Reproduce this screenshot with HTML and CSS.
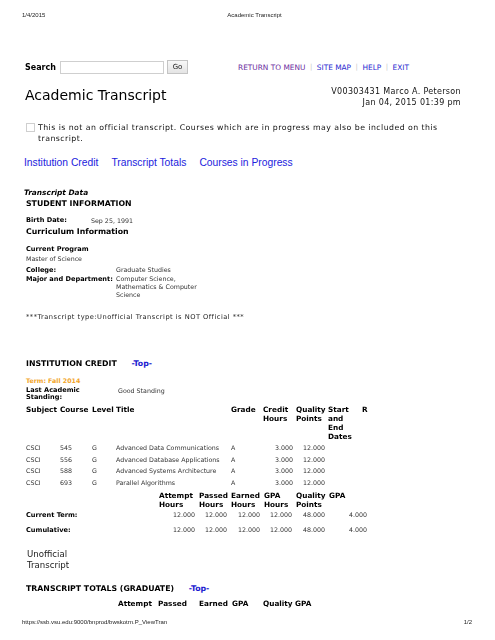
FILE: index.html
```html
<!DOCTYPE html>
<html>
<head>
<meta charset="utf-8">
<title>Academic Transcript</title>
<link rel="stylesheet" href="styles.css">
</head>
<body>
<div class="printhead gray"><span class="ph-date">1/4/2015</span><span class="ph-title">Academic Transcript</span></div>

<div class="searchbar">
  <div class="search"><b class="search-label gray">Search</b><span class="search-input"></span><span class="go-btn gray">Go</span></div>
  <div class="toplinks"><a class="visited">RETURN TO MENU</a><span class="sep">|</span><a>SITE MAP</a><span class="sep">|</span><a>HELP</a><span class="sep">|</span><a>EXIT</a></div>
</div>

<div class="titlerow">
  <h1 class="gray">Academic Transcript</h1>
  <div class="ident gray">V00303431 Marco A. Peterson<br>Jan 04, 2015 01:39 pm</div>
</div>

<div class="notice"><span class="chk"></span><p class="gray">This is not an official transcript. Courses which are in progress may also be included on this transcript.</p></div>

<nav class="sections"><a>Institution Credit</a><a>Transcript Totals</a><a>Courses in Progress</a></nav>

<div class="content">
  <div class="caption gray">Transcript Data</div>
  <div class="h-section gray">STUDENT INFORMATION</div>
  <div class="birth gray"><span class="lbl">Birth Date:</span><span class="val">Sep 25, 1991</span></div>
  <div class="h-section h-curr gray">Curriculum Information</div>
  <div class="lbl prog gray">Current Program</div>
  <div class="val degree gray">Master of Science</div>
  <div class="kv college gray"><span class="lbl">College:</span><span class="val">Graduate Studies</span></div>
  <div class="kv major gray"><span class="lbl">Major and Department:</span><span class="val">Computer Science,<br>Mathematics &amp; Computer<br>Science</span></div>
  <div class="ttype gray">***Transcript type:Unofficial Transcript is NOT Official ***</div>

  <div class="h-section h-inst"><span class="gray">INSTITUTION CREDIT</span> <a class="top">-Top-</a></div>
  <div class="term">Term: Fall 2014</div>
  <div class="standing gray"><span class="lbl">Last Academic<br>Standing:</span><span class="val">Good Standing</span></div>

  <table class="courses gray">
    <thead>
      <tr><th class="c-subj">Subject</th><th class="c-crse">Course</th><th class="c-lvl">Level</th><th class="c-title">Title</th><th class="c-grade">Grade</th><th class="c-cred">Credit<br>Hours</th><th class="c-qp">Quality<br>Points</th><th class="c-dates">Start<br>and<br>End<br>Dates</th><th class="c-r">R</th></tr>
    </thead>
    <tbody>
      <tr><td>CSCI</td><td>545</td><td>G</td><td>Advanced Data Communications</td><td>A</td><td class="num">3.000</td><td class="num">12.000</td><td></td><td></td></tr>
      <tr><td>CSCI</td><td>556</td><td>G</td><td>Advanced Database Applications</td><td>A</td><td class="num">3.000</td><td class="num">12.000</td><td></td><td></td></tr>
      <tr><td>CSCI</td><td>588</td><td>G</td><td>Advanced Systems Architecture</td><td>A</td><td class="num">3.000</td><td class="num">12.000</td><td></td><td></td></tr>
      <tr><td>CSCI</td><td>693</td><td>G</td><td>Parallel Algorithms</td><td>A</td><td class="num">3.000</td><td class="num">12.000</td><td></td><td></td></tr>
    </tbody>
  </table>

  <table class="gpa gray">
    <thead>
      <tr><th class="g-lbl"></th><th class="g-att">Attempt<br>Hours</th><th class="g-pass">Passed<br>Hours</th><th class="g-earn">Earned<br>Hours</th><th class="g-gpah">GPA<br>Hours</th><th class="g-qp">Quality<br>Points</th><th class="g-gpa">GPA</th></tr>
    </thead>
    <tbody>
      <tr class="g-cur"><th>Current Term:</th><td>12.000</td><td>12.000</td><td>12.000</td><td>12.000</td><td>48.000</td><td>4.000</td></tr>
      <tr class="g-cum"><th>Cumulative:</th><td>12.000</td><td>12.000</td><td>12.000</td><td>12.000</td><td>48.000</td><td>4.000</td></tr>
    </tbody>
  </table>

  <div class="unofficial gray">Unofficial<br>Transcript</div>

  <div class="h-section h-totals"><span class="gray">TRANSCRIPT TOTALS (GRADUATE)</span> <a class="top">-Top-</a></div>
  <table class="totals gray">
    <tr><th class="t-lbl"></th><th class="t-att">Attempt</th><th class="t-pass">Passed</th><th class="t-earn">Earned</th><th class="t-gpah">GPA</th><th class="t-qp">Quality</th><th class="t-gpa">GPA</th></tr>
  </table>
</div>

<div class="printfoot gray"><span>https://ssb.vsu.edu:9000/bnprod/bwskotrn.P_ViewTran</span><span>1/2</span></div>
</body>
</html>
```

FILE: styles.css
```css
html, body {
  margin: 0;
  padding: 0;
  background: #fff;
}
body {
  width: 495px;
  height: 640px;
  overflow: hidden;
  font-family: "DejaVu Sans", Verdana, sans-serif;
  color: #000;
}
a {
  color: #0000cc;
  text-decoration: none;
}
.gray {
  filter: grayscale(1);
}

/* print header / footer */
.printhead, .printfoot {
  font-family: "Liberation Sans", Arial, sans-serif;
  font-size: 6px;
  line-height: 8px;
  color: #222;
  display: flex;
}
.printhead {
  padding: 11px 0 0 22px;
  height: 8px;
}
.ph-title {
  margin-left: 182px;
}
.printfoot {
  justify-content: space-between;
  padding: 0 23px 0 22px;
  margin-top: 10px;
}

/* search bar */
.searchbar {
  margin-top: 41px;
  padding-left: 25px;
  display: grid;
  grid-template-columns: 213px auto;
  align-items: center;
  height: 14px;
}
.search {
  display: flex;
  align-items: center;
}
.search-label {
  font-size: 8px;
  width: 35px;
}
.search-input {
  width: 102px;
  height: 11px;
  border: 1px solid #cfcfcf;
  background: #fff;
}
.go-btn {
  margin-left: 3px;
  width: 19px;
  height: 12px;
  border: 1px solid #c4c4c4;
  background: linear-gradient(#f8f8f8, #e4e4e4);
  font-size: 7px;
  line-height: 12px;
  text-align: center;
  color: #222;
}
.toplinks {
  font-size: 7.4px;
  display: flex;
  align-items: center;
}
.toplinks a {
  color: #2a2ad0;
}
.toplinks a.visited {
  color: #6b2ea0;
}
.sep {
  color: #c8c8c8;
  margin: 0 4.5px;
  font-size: 7px;
}

/* title row */
.titlerow {
  margin-top: 12px;
  padding: 0 34px 0 25px;
  display: flex;
  justify-content: space-between;
  align-items: flex-start;
}
h1 {
  margin: 0;
  font-weight: normal;
  font-size: 14px;
  line-height: 18px;
}
.ident {
  font-size: 8px;
  letter-spacing: 0.33px;
  line-height: 11px;
  text-align: right;
  color: #111;
}

/* notice */
.notice {
  margin-top: 14px;
  padding-left: 26px;
  display: flex;
  align-items: flex-start;
}
.chk {
  flex: none;
  width: 7px;
  height: 7px;
  border: 1px solid #cfcfcf;
  margin-top: 1px;
  margin-right: 3px;
}
.notice p {
  margin: 0;
  font-size: 7.8px;
  letter-spacing: 0.45px;
  line-height: 11px;
  width: 415px;
  color: #111;
}

/* section links */
.sections {
  margin-top: 13px;
  padding-left: 24px;
  font-family: "Liberation Sans", Arial, sans-serif;
  font-size: 10.3px;
  line-height: 12px;
  display: flex;
  gap: 13px;
}
.sections a {
  color: #2222dd;
}

/* content */
.content {
  padding-left: 26px;
}
.lbl {
  font-weight: bold;
  font-size: 6.6px;
}
.val {
  font-size: 6.3px;
  color: #333;
}
.caption {
  margin-top: 19px;
  margin-left: -2px;
  font-weight: bold;
  font-style: italic;
  font-size: 7.4px;
  line-height: 9px;
}
.h-section {
  font-weight: bold;
  font-size: 7.8px;
  line-height: 10px;
  margin-top: 1.5px;
}
.birth {
  margin-top: 7.5px;
  line-height: 9px;
  display: flex;
}
.birth .lbl {
  width: 65px;
  flex: none;
}
.h-curr {
  margin-top: 2px;
}
.prog {
  margin-top: 7px;
  line-height: 10px;
}
.degree {
  line-height: 10.5px;
}
.kv {
  display: flex;
  line-height: 10.5px;
}
.kv .lbl {
  width: 90px;
  flex: none;
}
.major {
  margin-top: 0;
  line-height: 8px;
}
.major .val {
  width: 100px;
}
.ttype {
  margin-top: 14px;
  font-size: 6.7px;
  letter-spacing: 0.47px;
  line-height: 9px;
  color: #222;
}
.h-inst {
  margin-top: 37px;
}
.top {
  margin-left: 12px;
  color: #1a1ad0;
}
.term {
  margin-top: 8px;
  font-weight: bold;
  font-size: 6.3px;
  line-height: 8px;
  color: #f2a52a;
}
.standing {
  margin-top: 1.5px;
  display: flex;
  line-height: 7.5px;
}
.standing .lbl {
  width: 92px;
  flex: none;
}

/* tables */
table {
  border-collapse: collapse;
  table-layout: fixed;
}
th, td {
  padding: 0;
  text-align: left;
  vertical-align: top;
  white-space: nowrap;
}
th {
  font-weight: bold;
  font-size: 7.3px;
  line-height: 9px;
}
td {
  font-size: 6.3px;
  color: #333;
}
.courses {
  margin-top: 3px;
  width: 354px;
}
.c-subj { width: 34px; }
.c-crse { width: 32px; }
.c-lvl { width: 24px; }
.c-title { width: 115px; }
.c-grade { width: 32px; }
.c-cred { width: 33px; }
.c-qp { width: 32px; }
.c-dates { width: 34px; }
.c-r { width: 18px; }
.courses thead th {
  padding-bottom: 1.5px;
}
.courses td {
  height: 11.5px;
  line-height: 11.5px;
}
.courses td.num {
  text-align: right;
  padding-right: 3px;
}

.gpa {
  margin-top: 3px;
  width: 345px;
}
.g-lbl { width: 133px; }
.g-att { width: 40px; }
.g-pass { width: 32px; }
.g-earn { width: 33px; }
.g-gpah { width: 32px; }
.g-qp { width: 33px; }
.g-gpa { width: 42px; }
.gpa tbody th {
  font-size: 6.6px;
  line-height: 12px;
}
.gpa tbody td {
  text-align: right;
  padding-right: 4px;
  line-height: 12px;
}
.gpa .g-cum th, .gpa .g-cum td {
  padding-top: 3px;
}

.unofficial {
  margin-top: 13px;
  margin-left: 1px;
  font-size: 8.6px;
  line-height: 10.7px;
  color: #222;
}
.h-totals {
  margin-top: 13.5px;
}
.totals {
  margin-top: 5.5px;
  width: 315px;
}
.t-lbl { width: 92px; }
.t-att { width: 40px; }
.t-pass { width: 41px; }
.t-earn { width: 33px; }
.t-gpah { width: 31px; }
.t-qp { width: 32px; }
.t-gpa { width: 46px; }
```
